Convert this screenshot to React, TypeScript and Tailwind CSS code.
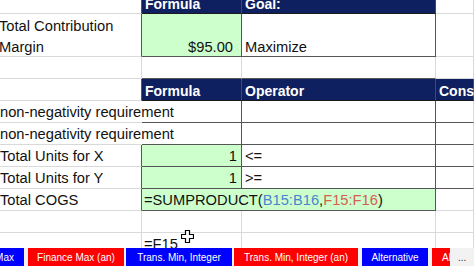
import React from "react";

const NAVY = "bg-[#0f2060]";
const GREEN = "bg-[#ccffcc]";

type CellProps = {
  className?: string;
  children?: React.ReactNode;
};

function Cell({ className = "", children }: CellProps) {
  return (
    <div className={`relative flex min-w-0 items-center whitespace-nowrap border-r border-b px-[3px] pt-[2px] ${className}`}>
      {children}
    </div>
  );
}

const light = "border-r-[#d9d9d9] border-b-[#d9d9d9]";
const dark = "border-r-[#555] border-b-[#555]";
const darkBottom = "border-r-[#d9d9d9] border-b-[#555]";
const darkRight = "border-r-[#555] border-b-[#d9d9d9]";

function Header({ children, className = "" }: CellProps) {
  return (
    <Cell className={`${NAVY} border-r-[#3a4a78] border-b-[#1a1a1a] text-[14px] font-bold text-white ${className}`}>
      <span className="pt-[2px]">{children}</span>
    </Cell>
  );
}

function Tab({ label, color, className = "" }: { label: string; color: "red" | "blue"; className?: string }) {
  const bg = color === "red" ? "bg-[#ff0000]" : "bg-[#0000ff]";
  return (
    <div className={`flex h-full shrink-0 items-center justify-center overflow-hidden whitespace-nowrap text-white ${bg} ${className}`}>
      {label}
    </div>
  );
}

export default function App() {
  return (
    <div className="relative h-[266px] w-[474px] overflow-hidden bg-white font-['Liberation_Sans',Arial,sans-serif] text-[14.7px] text-[#111]">
      <div className="-mt-[8px] grid grid-cols-[142px_100px_194px_1fr] grid-rows-[22px_43px_22px_22px_22px_22px_22px_22px_22px_22px_22px]">
        {/* row 1 */}
        <Cell className={darkRight} />
        <Header>Formula</Header>
        <Header className="border-r-[#1a1a1a]">Goal:</Header>
        <Cell className={light} />

        {/* row 2 */}
        <Cell className={`${darkRight} items-start !px-0 !pt-[2px] leading-[21px]`}>
          <div className="-ml-[1px]">
            Total Contribution
            <br />
            Margin
          </div>
        </Cell>
        <Cell className={`${GREEN} ${dark} items-end justify-end !pr-[8px] leading-[18px]`}>$95.00</Cell>
        <Cell className={`${dark} items-end leading-[18px]`}>Maximize</Cell>
        <Cell className={light} />

        {/* row 3 */}
        <Cell className={light} />
        <Cell className={darkBottom} />
        <Cell className={darkBottom} />
        <Cell className={light} />

        {/* row 4 */}
        <Cell className={darkRight} />
        <Header>Formula</Header>
        <Header className="border-r-[#1a1a1a]">Operator</Header>
        <Header className="border-r-[#3a4a78]">Const</Header>

        {/* row 5 */}
        <Cell className="overflow-visible !border-r-transparent border-b-[#d9d9d9] !px-0">
          <span className="z-10">non-negativity requirement</span>
        </Cell>
        <Cell className={dark} />
        <Cell className={dark} />
        <Cell className={darkBottom} />

        {/* row 6 */}
        <Cell className="overflow-visible !border-r-transparent border-b-[#d9d9d9] !px-0">
          <span className="z-10">non-negativity requirement</span>
        </Cell>
        <Cell className={dark} />
        <Cell className={dark} />
        <Cell className={darkBottom} />

        {/* row 7 */}
        <Cell className={`${darkRight} !px-0`}>Total Units for X</Cell>
        <Cell className={`${GREEN} ${dark} justify-end !pr-[4px]`}>1</Cell>
        <Cell className={dark}>&lt;=</Cell>
        <Cell className={darkBottom} />

        {/* row 8 */}
        <Cell className={`${darkRight} !px-0`}>Total Units for Y</Cell>
        <Cell className={`${GREEN} ${dark} justify-end !pr-[4px]`}>1</Cell>
        <Cell className={dark}>&gt;=</Cell>
        <Cell className={darkBottom} />

        {/* row 9 */}
        <Cell className={`${darkRight} !px-0`}>Total COGS</Cell>
        <Cell className={`${GREEN} col-span-2 ${dark} !pl-[2px]`}>
          <span>
            =SUMPRODUCT(<span className="text-[#4a84cf]">B15:B16</span>,<span className="text-[#d4604f]">F15:F16</span>)
          </span>
        </Cell>
        <Cell className={light} />

        {/* row 10 */}
        <Cell className={light} />
        <Cell className={light} />
        <Cell className={light} />
        <Cell className={light} />

        {/* row 11 */}
        <Cell className={light} />
        <Cell className={`${light} !pl-[2px]`}>=F15</Cell>
        <Cell className={light} />
        <Cell className={light} />
      </div>

      {/* cursor */}
      <svg className="absolute left-[181px] top-[230px]" width="13" height="13" viewBox="0 0 13 13">
        <polygon
          points="4.5,0.5 8.5,0.5 8.5,4.5 12.5,4.5 12.5,8.5 8.5,8.5 8.5,12.5 4.5,12.5 4.5,8.5 0.5,8.5 0.5,4.5 4.5,4.5"
          fill="white"
          stroke="black"
          strokeWidth="1.2"
        />
      </svg>

      {/* sheet tabs */}
      <div className="absolute bottom-0 left-0 flex h-[18px] w-full items-stretch bg-[#f2f2f2] text-[10px] font-['Liberation_Sans',Arial,sans-serif]">
        <Tab label="Max" color="blue" className="w-[24px] !justify-end pr-[10px]" />
        <Tab label="Finance Max (an)" color="red" className="ml-[4px] w-[96px]" />
        <Tab label="Trans. Min, Integer" color="blue" className="ml-[2px] w-[106px]" />
        <Tab label="Trans. Min, Integer (an)" color="red" className="ml-[2px] w-[124px]" />
        <Tab label="Alternative" color="blue" className="ml-[4px] w-[66px]" />
        <Tab label="Al" color="red" className="ml-[4px] w-[18px] !justify-start pl-[10px]" />
        <div className="ml-[8px] flex items-center text-[#333]">...</div>
      </div>
    </div>
  );
}
